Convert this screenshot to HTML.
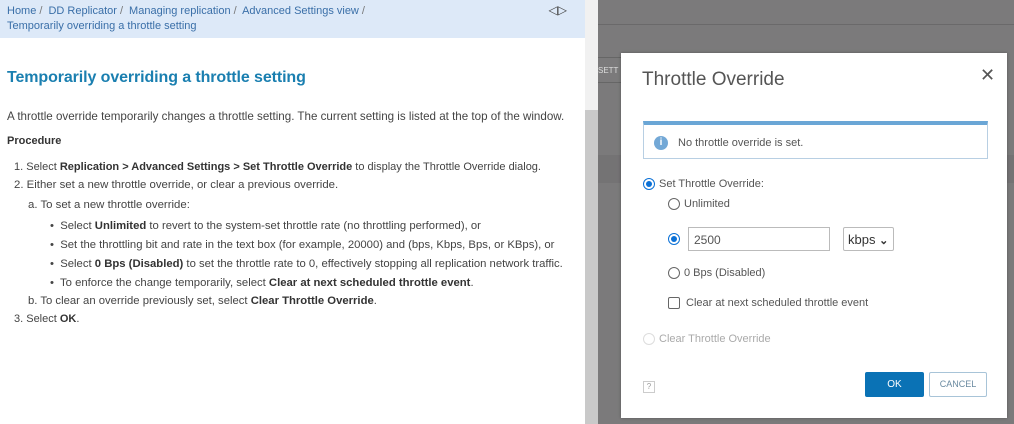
<!DOCTYPE html>
<html><head><meta charset="utf-8"><style>
*{margin:0;padding:0;box-sizing:border-box}
body{width:1014px;height:424px;overflow:hidden;position:relative;background:#fff;font-family:"Liberation Sans",sans-serif;color:#444}
#left{position:absolute;left:0;top:0;width:585px;height:424px;background:#fff}
#bc{height:38px;background:#dde9f8;padding:4px 7px;font-size:11px;line-height:15px;color:#3a6fa8;position:relative}
#bc .s{color:#777;margin:0 3px}
#arr{position:absolute;right:18px;top:3px;font-size:12px;color:#444}
h1{position:absolute;left:7px;top:69px;font-size:16px;color:#1a7fb0;font-weight:bold;letter-spacing:-0.1px}
.p{position:absolute;left:7px;font-size:11px;color:#444;white-space:nowrap}
b{color:#333}
#sb{position:absolute;left:585px;top:0;width:13px;height:424px;background:#f1f1f1}
#th{position:absolute;left:585px;top:110px;width:13px;height:314px;background:#c9c9c9}
#ov{position:absolute;left:598px;top:0;width:416px;height:424px;background:#7b7a7b}
#modal{position:absolute;left:621px;top:53px;width:386px;height:365px;background:#fff;box-shadow:0 0 3px rgba(0,0,0,.3)}
.m{position:absolute;font-size:11px;color:#555;white-space:nowrap}
.r{position:absolute;width:12px;height:12px;border:1px solid #666;border-radius:50%;background:#fff}
.r.on{border-color:#0a70d6}
.r.on::after{content:"";position:absolute;left:2px;top:2px;width:6px;height:6px;border-radius:50%;background:#0a70d6}
</style></head><body>
<div id="left">
<div id="bc">Home<span class="s">/</span> DD Replicator<span class="s">/</span> Managing replication<span class="s">/</span> Advanced Settings view<span class="s">/</span><br>Temporarily overriding a throttle setting<span id="arr">◁▷</span></div>
<h1>Temporarily overriding a throttle setting</h1>
<div class="p" style="top:110px;font-size:11.6px">A throttle override temporarily changes a throttle setting. The current setting is listed at the top of the window.</div>
<div class="p" style="top:135px"><b>Procedure</b></div>
<div class="p" style="top:161px;left:14px">1. Select <b>Replication &gt; Advanced Settings &gt; Set Throttle Override</b> to display the Throttle Override dialog.</div>
<div class="p" style="top:179px;left:14px;font-size:11.4px">2. Either set a new throttle override, or clear a previous override.</div>
<div class="p" style="top:199px;left:28px;font-size:11.4px">a. To set a new throttle override:</div>
<div class="p" style="top:220px;left:50px;font-size:11.3px">•&nbsp; Select <b>Unlimited</b> to revert to the system-set throttle rate (no throttling performed), or</div>
<div class="p" style="top:239px;left:50px;font-size:11.3px">•&nbsp; Set the throttling bit and rate in the text box (for example, 20000) and (bps, Kbps, Bps, or KBps), or</div>
<div class="p" style="top:258px;left:50px;font-size:11.3px">•&nbsp; Select <b>0 Bps (Disabled)</b> to set the throttle rate to 0, effectively stopping all replication network traffic.</div>
<div class="p" style="top:277px;left:50px;font-size:11.3px">•&nbsp; To enforce the change temporarily, select <b>Clear at next scheduled throttle event</b>.</div>
<div class="p" style="top:295px;left:28px;font-size:11.3px">b. To clear an override previously set, select <b>Clear Throttle Override</b>.</div>
<div class="p" style="top:313px;left:14px">3. Select <b>OK</b>.</div>
</div>
<div id="sb"></div><div id="th"></div>
<div id="ov">
<div style="position:absolute;left:0;top:24px;width:416px;height:1px;background:#6a696a"></div>
<div style="position:absolute;left:0;top:57px;width:30px;height:26px;border-top:1px solid #666;border-bottom:1px solid #666;font-size:8px;color:#ddd;padding-top:8px">SETT</div>
<div style="position:absolute;left:0;top:155px;width:416px;height:28px;background:#747374"></div>
</div>
<div id="modal">
<div class="m" style="left:21px;top:16px;font-size:19px;color:#555">Throttle Override</div>
<div class="m" style="left:359px;top:12px;font-size:18px;color:#555">✕</div>
<div style="position:absolute;left:22px;top:68px;width:345px;height:38px;border:1px solid #b8cfe3;border-top:4px solid #6aa6d6"></div>
<div style="position:absolute;left:33px;top:83px;width:14px;height:14px;border-radius:50%;background:#73a8d6;color:#fff;font-size:10px;font-weight:bold;text-align:center;line-height:14px">i</div>
<div class="m" style="left:57px;top:84px">No throttle override is set.</div>
<div class="r on" style="left:22px;top:125px"></div><div class="m" style="left:38px;top:125px">Set Throttle Override:</div>
<div class="r" style="left:47px;top:145px"></div><div class="m" style="left:63px;top:145px">Unlimited</div>
<div class="r on" style="left:47px;top:180px"></div>
<div style="position:absolute;left:67px;top:174px;width:142px;height:24px;border:1px solid #bbb"></div>
<div class="m" style="left:73px;top:180px;font-size:12px">2500</div>
<div style="position:absolute;left:222px;top:174px;width:51px;height:24px;border:1px solid #bbb;border-radius:2px"></div>
<div class="m" style="left:227px;top:179px;color:#333;font-size:13px">kbps <b style="font-size:11px">⌄</b></div>
<div class="r" style="left:47px;top:214px"></div><div class="m" style="left:63px;top:214px">0 Bps (Disabled)</div>
<div style="position:absolute;left:47px;top:244px;width:12px;height:12px;border:1px solid #666;border-radius:2px"></div><div class="m" style="left:65px;top:244px">Clear at next scheduled throttle event</div>
<div class="r" style="left:22px;top:280px;border-color:#ddd"></div><div class="m" style="left:38px;top:280px;color:#aaa">Clear Throttle Override</div>
<div style="position:absolute;left:22px;top:328px;width:12px;height:12px;border:1px solid #ccc;font-size:8px;color:#999;text-align:center;line-height:10px">?</div>
<div style="position:absolute;left:244px;top:319px;width:59px;height:25px;background:#0a72b5;color:#fff;font-size:10px;text-align:center;line-height:25px;border-radius:2px">OK</div>
<div style="position:absolute;left:308px;top:319px;width:58px;height:25px;border:1px solid #a8c4d8;color:#6a8aa0;font-size:9px;text-align:center;line-height:23px;border-radius:2px">CANCEL</div>
</div>
</body></html>
